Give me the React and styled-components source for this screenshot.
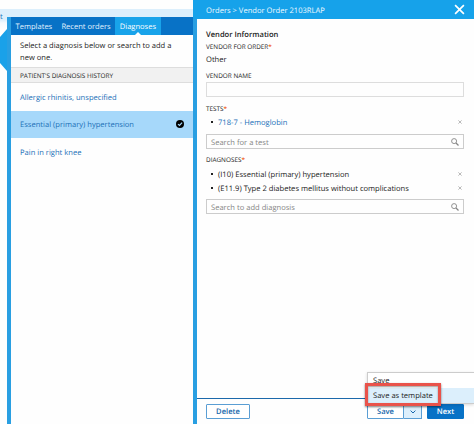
import React from 'react'
import styled, { createGlobalStyle } from 'styled-components'

const history = [
  { name: 'Allergic rhinitis, unspecified' },
  { name: 'Essential (primary) hypertension', selected: true },
  { name: 'Pain in right knee' },
]

const diagnoses = [
  '(I10) Essential (primary) hypertension',
  '(E11.9) Type 2 diabetes mellitus without complications',
]

function CheckIcon() {
  return (
    <svg width="8" height="8" viewBox="0 0 8 8">
      <circle cx="4" cy="4" r="4" fill="#000" />
      <path d="M2 4.1 L3.5 5.5 L6.1 2.7" fill="none" stroke="#a6d8fa" strokeWidth="1.2" />
    </svg>
  )
}

function SearchIcon() {
  return (
    <svg width="8" height="8" viewBox="0 0 8 8" fill="none" stroke="#858585">
      <circle cx="3.1" cy="3.1" r="2.5" strokeWidth="0.9" />
      <path d="M5 5 L7.5 7.5" strokeWidth="1.2" />
    </svg>
  )
}

function Cross({ size, color, weight }) {
  return (
    <svg width={size} height={size} viewBox="0 0 10 10">
      <path d="M1 1 L9 9 M9 1 L1 9" stroke={color} strokeWidth={weight} fill="none" />
    </svg>
  )
}

function Search({ placeholder }) {
  return (
    <Field $search>
      <Text>{placeholder}</Text>
      <SearchIcon />
    </Field>
  )
}

function Item({ children, link }) {
  return (
    <ListItem $link={link}>
      <Text>{children}</Text>
      <Cross size={4} color="#999" weight={1.7} />
    </ListItem>
  )
}

function App() {
  return (
    <>
      <Global />
      <Page>
        <Gutter>
          <Behind>t</Behind>
          <svg width="7" height="42" viewBox="0 0 7 42">
            <path d="M7 0 L7 42 L0 34 L0 8 Z" fill="#1aa1e9" />
          </svg>
        </Gutter>
        <Left>
          <Strip />
          <Panel>
            <Tabs>
              <Tab>Templates</Tab>
              <Tab>Recent orders</Tab>
              <Tab $active>Diagnoses</Tab>
            </Tabs>
            <Intro>Select a diagnosis below or search to add a<br />new one.</Intro>
            <Heading>PATIENT'S DIAGNOSIS HISTORY</Heading>
            {history.map((val) => (
              <Row key={val.name} $selected={val.selected}>
                <Text>{val.name}</Text>
                {val.selected && <CheckIcon />}
              </Row>
            ))}
          </Panel>
        </Left>
        <Right>
          <Header>
            <Text>Orders &gt; Vendor Order 2103RLAP</Text>
            <Cross size={11} color="#fff" weight={1.5} />
          </Header>
          <Body>
            <Title>Vendor Information</Title>
            <Label $top={0}>VENDOR FOR ORDER<i>*</i></Label>
            <Value>Other</Value>
            <Label $top={3}>VENDOR NAME</Label>
            <Field />
            <Label $top={5}>TESTS<i>*</i></Label>
            <Item link>718-7 - Hemoglobin</Item>
            <Gap $h={5} />
            <Search placeholder="Search for a test" />
            <Label $top={4} $bottom={1}>DIAGNOSES<i>*</i></Label>
            {diagnoses.map((val) => <Item key={val}>{val}</Item>)}
            <Gap $h={4} />
            <Search placeholder="Search to add diagnosis" />
          </Body>
          <Footer>
            <Button $w={44}>Delete</Button>
            <Actions>
              <Split>
                <Button $w={37} $first>Save</Button>
                <Caret>
                  <svg width="6" height="4" viewBox="0 0 6 4">
                    <path d="M0.6 0.6 L3 3 L5.4 0.6" fill="none" stroke="#1767ab" strokeWidth="1" />
                  </svg>
                </Caret>
              </Split>
              <Button $w={37} $primary>Next</Button>
            </Actions>
            <Menu>
              <Option>Save</Option>
              <Option $active>Save as template</Option>
              <Outline />
            </Menu>
          </Footer>
        </Right>
      </Page>
    </>
  )
}

export default App

const Global = createGlobalStyle`
  * { box-sizing: border-box; }
  body {
    margin: 0;
    background: #fefefe;
    font-family: 'Open Sans', 'Noto Sans', sans-serif;
    font-size: 7.58px;
    text-rendering: geometricPrecision;
    color: #222;
    overflow: hidden;
  }
  svg { display: block; flex: none; }
`
const Page = styled.div`
  display: flex;
  width: 474px;
  height: 424px;
  overflow: hidden;
  white-space: nowrap;
`
const Text = styled.span`
  flex: 1;
  padding-top: 2px;
  line-height: 10px;
`
const Gutter = styled.div`
  width: 7px;
  padding-top: 9px;
  overflow: hidden;
`
const Behind = styled.div`
  height: 20px;
  padding-top: 3px;
  background: linear-gradient(#dceffc 11px, #f4fafe 14px, #fefefe);
  color: #1874bb;
  line-height: 11px;
`
const Left = styled.div`
  display: flex;
  flex-direction: column;
  width: 186px;
  padding-top: 9px;
`
const Strip = styled.div`
  height: 8px;
  background: #dceffc;
`
const Panel = styled.div`
  flex: 1;
  border-left: 4px solid #299fe2;
  background: #fefefe;
`
const Tabs = styled.div`
  display: flex;
  height: 18px;
  background: #0872c6;
`
const Tab = styled.div`
  position: relative;
  height: 18px;
  padding: 0 4.6px;
  line-height: 20px;
  font-size: 7.55px;
  color: ${(p) => (p.$active ? '#fff' : '#e3f3ff')};
  background: ${(p) => (p.$active ? '#18a3ea' : 'transparent')};

  &::after {
    content: '';
    display: ${(p) => (p.$active ? 'block' : 'none')};
    position: absolute;
    bottom: 0;
    left: 50%;
    margin-left: -3px;
    border: 3px solid transparent;
    border-top: 0;
    border-bottom-color: #fff;
  }
`
const Intro = styled.div`
  height: 32px;
  padding: 6px 9px 0;
  line-height: 11.7px;
`
const Heading = styled.div`
  height: 16px;
  padding-left: 9px;
  border-top: 1px solid #ddd;
  border-bottom: 1px solid #ddd;
  background: #f1f1f1;
  font-size: 6.4px;
  line-height: 15px;
`
const Row = styled.div`
  display: flex;
  align-items: center;
  justify-content: space-between;
  height: 27.5px;
  padding: 0 9px;
  color: #1c71b8;
  background: ${(p) => (p.$selected ? '#a6d8fa' : 'transparent')};
`
const Right = styled.div`
  display: flex;
  flex-direction: column;
  width: 281px;
  border-left: 4px solid #299fe2;
  background: #fefefe;
`
const Header = styled.div`
  display: flex;
  align-items: center;
  justify-content: space-between;
  height: 19px;
  margin-left: -4px;
  padding: 0 9px 0 13px;
  background: #16a2ea;
  color: #eef9ff;
`
const Body = styled.div`
  flex: 1;
  padding: 9px 10px 0 9px;
`
const Title = styled.div`
  height: 12px;
  line-height: 14px;
  font-weight: 600;
`
const Label = styled.div`
  padding: ${(p) => p.$top}px 0 ${(p) => p.$bottom || 0}px;
  line-height: 13px;
  font-size: 6.4px;

  i {
    color: #f0601a;
    font-style: normal;
    font-weight: 600;
  }
`
const Value = styled.div`
  height: 13px;
  line-height: 15px;
`
const Field = styled.div`
  display: flex;
  align-items: center;
  justify-content: space-between;
  height: 15px;
  padding: 0 4px;
  border: 1px solid ${(p) => (p.$search ? '#ccc' : '#ddd')};
  color: #858585;
`
const Gap = styled.div`
  height: ${(p) => p.$h}px;
`
const ListItem = styled.div`
  display: flex;
  align-items: center;
  justify-content: space-between;
  height: 14px;
  padding: 0 2px 0 5px;
  color: ${(p) => (p.$link ? '#1c71b8' : '#222')};

  &::before {
    content: '';
    width: 2px;
    height: 2px;
    margin-right: 5px;
    background: #222;
  }
`
const Footer = styled.div`
  position: relative;
  display: flex;
  justify-content: space-between;
  height: 26px;
  padding: 5px 10px 0 9px;
  border-top: 1px solid #1c69ab;
`
const Actions = styled.div`
  display: flex;
  gap: 5px;
`
const Split = styled.div`
  display: flex;
`
const Button = styled.div`
  width: ${(p) => p.$w}px;
  height: 15px;
  border: 1px solid ${(p) => (p.$primary ? '#0872c6' : '#5a9ed4')};
  border-radius: ${(p) => (p.$first ? '1px 0 0 1px' : '1px')};
  background: ${(p) => (p.$primary ? '#0872c6' : '#fff')};
  color: ${(p) => (p.$primary ? '#fff' : '#1767ab')};
  font-weight: 600;
  line-height: 14px;
  text-align: center;
`
const Caret = styled.div`
  display: flex;
  align-items: center;
  justify-content: center;
  width: 18px;
  height: 15px;
  border: 1px solid #5a9ed4;
  border-left: 0;
  background: #dceffc;
`
const Menu = styled.div`
  position: absolute;
  right: 0;
  bottom: 20px;
  width: 107px;
  border: 1px solid #ccc;
  border-right: 0;
  background: #fff;
  box-shadow: 0 1px 3px rgba(0, 0, 0, 0.15);
`
const Option = styled.div`
  height: 15px;
  padding-left: 5px;
  line-height: 16px;
  background: ${(p) => (p.$active ? '#dceffc' : '#fff')};
`
const Outline = styled.div`
  position: absolute;
  left: -3px;
  top: 10px;
  width: 76px;
  height: 23px;
  border: 3px solid #e9534b;
  box-shadow: 0 1px 2px rgba(0, 0, 0, 0.5), inset 0 1px 2px rgba(0, 0, 0, 0.4);
`
